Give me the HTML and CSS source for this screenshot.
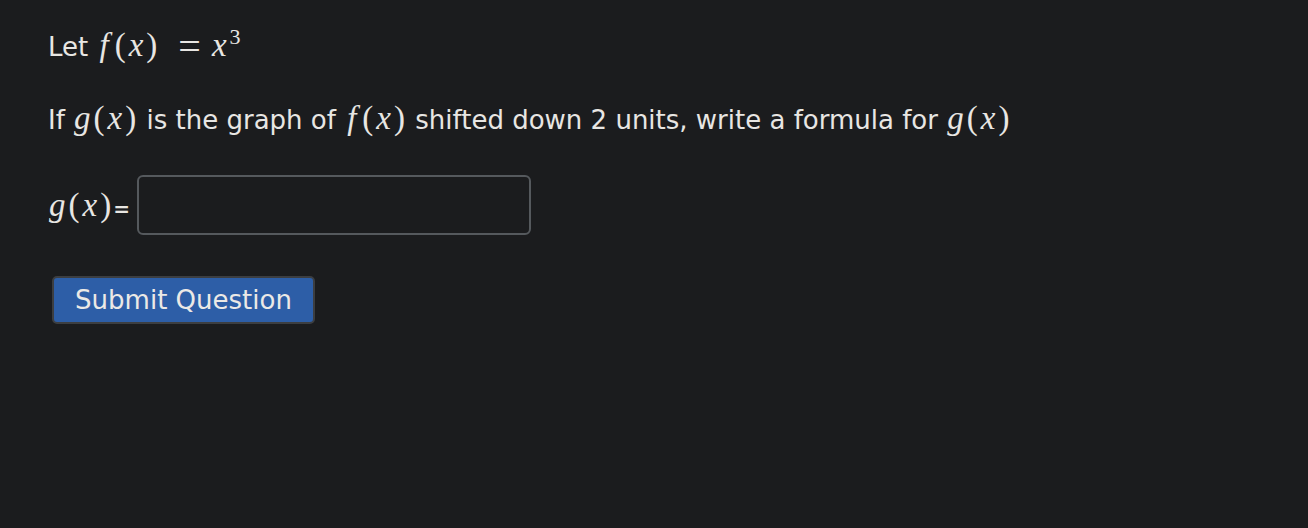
FILE: index.html
```html
<!DOCTYPE html>
<html lang="en">
<head>
    <meta charset="UTF-8">
    <title>Question</title>
    <link rel="stylesheet" href="styles.css">
</head>
<body>
    <div class="question">
        <p class="line">Let <span class="math"><i class="f">f</i>(<i>x</i>)<span class="op">=</span><i>x</i><sup>3</sup></span></p>
        <p class="line">If <span class="math"><i>g</i>(<i>x</i>)</span> is the graph of <span class="math"><i class="f">f</i>(<i>x</i>)</span> shifted down 2 units, write a formula for <span class="math"><i>g</i>(<i>x</i>)</span></p>
        <div class="answer">
            <label for="ans"><span class="math"><i>g</i>(<i>x</i>)</span><span class="eq">=</span></label>
            <input type="text" id="ans" class="answer-box">
        </div>
        <button class="submit">Submit Question</button>
    </div>
</body>
</html>
```

FILE: styles.css
```css
body {
    margin: 0;
    background-color: #1b1c1e;
    color: #e8e6e3;
    font-family: "DejaVu Sans", sans-serif;
    font-size: 26px;
}

.question {
    padding: 15px 48px;
}

.line {
    margin: 0 0 27px 0;
    line-height: 44px;
}

.math {
    font-family: "Liberation Serif", serif;
    font-size: 33px;
    letter-spacing: 2px;
}

.math i {
    font-style: italic;
    padding: 0 1px;
}

.math i.f {
    padding: 0 4px 0 3px;
}

.math .op {
    font-size: 40px;
    line-height: 30px;
    vertical-align: -4px;
    padding: 0 8px 0 19px;
}

.math sup {
    font-size: 22px;
    font-style: normal;
}

.answer {
    display: flex;
    align-items: center;
    gap: 7px;
    margin-top: 33px;
}

.eq {
    font-size: 20px;
    font-weight: bold;
}

.answer-box {
    width: 394px;
    height: 60px;
    box-sizing: border-box;
    border: 2px solid #55595d;
    border-radius: 6px;
    background-color: #1b1c1e;
    color: #e8e6e3;
}

.submit {
    display: block;
    margin: 41px 0 0 4px;
    width: 263px;
    height: 48px;
    font-family: "DejaVu Sans", sans-serif;
    font-size: 26px;
    color: #ebe9e6;
    background-color: #2d5ea7;
    border: 2px solid #3c3e41;
    border-radius: 5px;
}
```
